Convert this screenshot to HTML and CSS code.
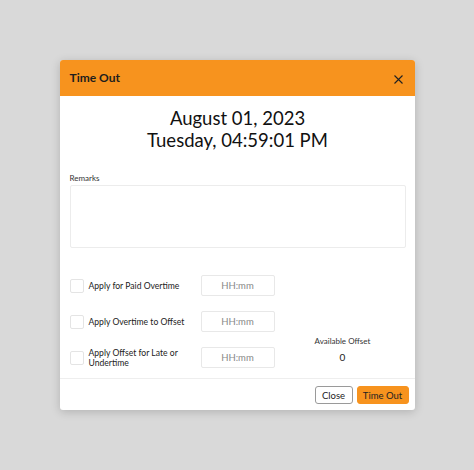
FILE: index.html
```html
<!DOCTYPE html>
<html lang="en">
<head>
<meta charset="utf-8">
<title>Time Out</title>
<link rel="stylesheet" href="styles.css">
</head>
<body>
<div class="backdrop">
  <div class="modal">
    <div class="modal-header">
      <span class="modal-title">Time Out</span>
      <svg class="close-icon" width="9" height="9" viewBox="0 0 9 9"><path d="M0.5 0.5L8.5 8.5M8.5 0.5L0.5 8.5" stroke="#222" stroke-width="1.1" fill="none"/></svg>
    </div>
    <div class="modal-body">
      <div class="datetime">
        <div>August 01, 2023</div>
        <div>Tuesday, 04:59:01 PM</div>
      </div>
      <div class="remarks">
        <label class="remarks-label">Remarks</label>
        <div class="remarks-box"></div>
      </div>
      <div class="options">
        <span class="checkbox"></span>
        <span class="opt-label">Apply for Paid Overtime</span>
        <span class="time-input">HH:mm</span>
        <span class="empty"></span>

        <span class="checkbox"></span>
        <span class="opt-label">Apply Overtime to Offset</span>
        <span class="time-input">HH:mm</span>

        <div class="offset">
          <div class="offset-label">Available Offset</div>
          <div class="offset-value">0</div>
        </div>

        <span class="checkbox"></span>
        <span class="opt-label">Apply Offset for Late or Undertime</span>
        <span class="time-input">HH:mm</span>
      </div>
    </div>
    <div class="modal-footer">
      <button class="btn btn-close">Close</button>
      <button class="btn btn-primary">Time Out</button>
    </div>
  </div>
</div>
</body>
</html>
```
FILE: styles.css
```css
* { box-sizing: border-box; }
html, body { margin: 0; padding: 0; }
body {
  background: #d9d9d9;
  font-family: "Lato", "Noto Sans", sans-serif;
  color: #1f1f1f;
}
.backdrop {
  width: 474px;
  height: 470px;
  display: flex;
  align-items: center;
  justify-content: center;
}
.modal {
  width: 355px;
  height: 350px;
  background: #fff;
  border-radius: 3px;
  overflow: hidden;
  box-shadow: 0 2px 10px rgba(0,0,0,0.18);
  display: flex;
  flex-direction: column;
}
.modal-header {
  height: 36px;
  flex: none;
  background: #f7931e;
  display: flex;
  align-items: center;
  justify-content: space-between;
  padding: 0 12px 0 10px;
}
.modal-title {
  font-size: 12px;
  font-weight: 700;
  color: #1d1d1d;
  padding-bottom: 1px;
}
.close-icon { margin-top: 2px; }
.modal-body {
  flex: 1;
  padding: 11px 9px 0 10px;
}
.datetime {
  text-align: center;
  font-size: 18.5px;
  line-height: 22px;
  color: #111;
}
.remarks { margin-top: 22px; }
.remarks-label {
  display: block;
  font-size: 8px;
  line-height: 10px;
  color: #333;
}
.remarks-box {
  margin-top: 2px;
  height: 63px;
  border: 1px solid #ececec;
  border-radius: 2px;
}
.options {
  margin-top: 27px;
  display: grid;
  grid-template-columns: 14px 107px 74px 1fr;
  grid-auto-rows: 21px;
  column-gap: 5px;
  row-gap: 15px;
  align-items: center;
}
.checkbox {
  width: 14px;
  height: 14px;
  border: 1px solid #e4e4e4;
  border-radius: 2px;
}
.opt-label {
  font-size: 8.6px;
  line-height: 10px;
  color: #222;
  padding-right: 4px;
}
.time-input {
  height: 21px;
  border: 1px solid #e8e8e8;
  border-radius: 2px;
  font-size: 9.5px;
  color: #888;
  display: flex;
  align-items: center;
  justify-content: center;
}
.offset {
  grid-column: 4;
  grid-row: 2 / span 2;
  align-self: end;
  text-align: center;
}
.offset-label {
  font-size: 8px;
  line-height: 10px;
  color: #333;
  margin-bottom: 1px;
}
.offset-value {
  font-size: 10px;
  line-height: 21px;
  color: #222;
}
.modal-footer {
  flex: none;
  height: 32px;
  border-top: 1px solid #eeeeee;
  display: flex;
  justify-content: flex-end;
  align-items: flex-start;
  gap: 4px;
  padding: 7px 6px 0 0;
}
.btn {
  height: 18px;
  font-family: inherit;
  font-size: 9.5px;
  border-radius: 3px;
  padding: 0;
  color: #222;
  white-space: nowrap;
  cursor: pointer;
}
.btn-close {
  width: 38px;
  background: #fff;
  border: 1px solid #9a9a9a;
}
.btn-primary {
  width: 52px;
  background: #f7931e;
  border: 1px solid #f7931e;
}
```
